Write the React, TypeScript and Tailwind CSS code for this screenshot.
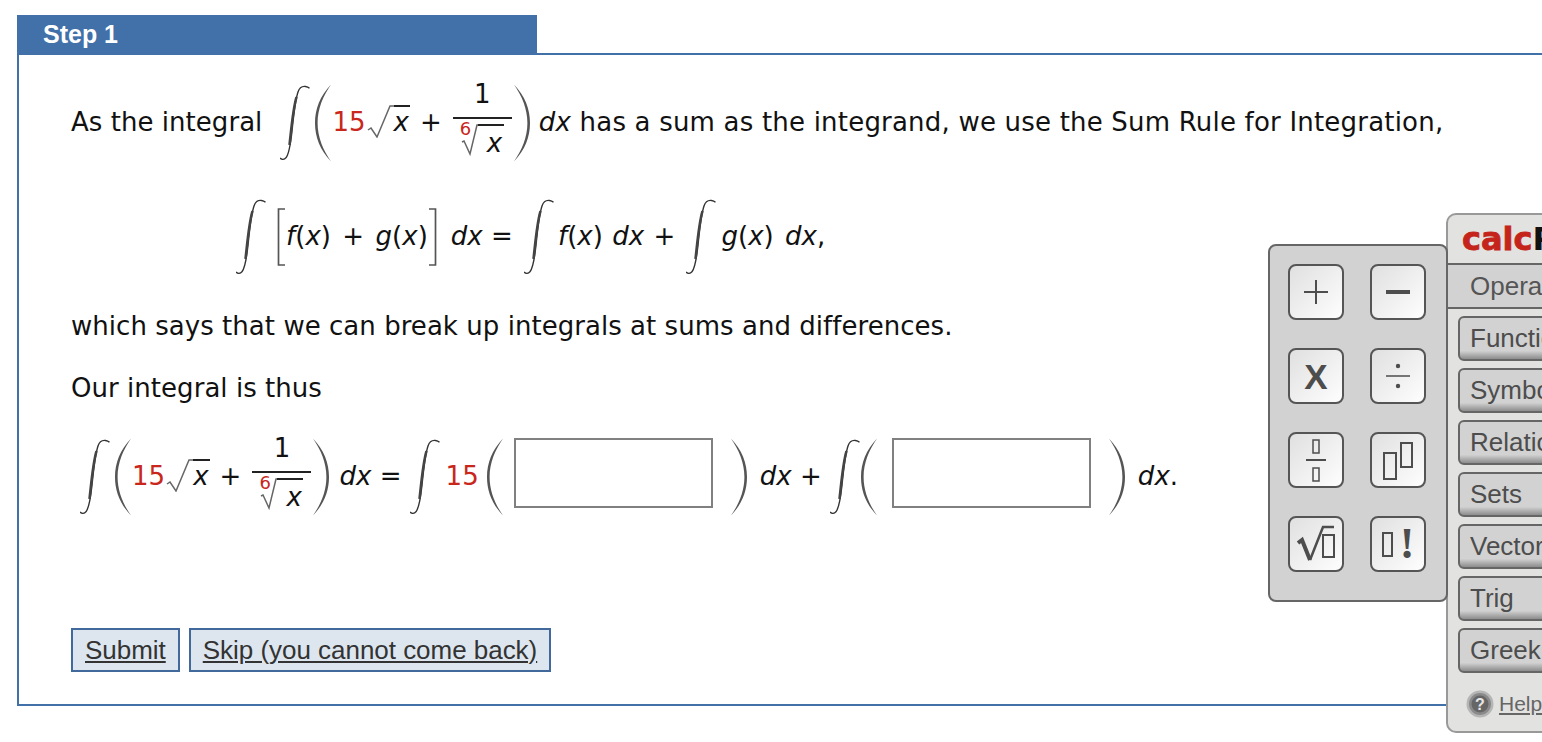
import type { ReactNode } from 'react'

const Integral = () => (
  <svg width="30" height="76" viewBox="0 0 30 76" fill="none" className="shrink-0">
    <path d="M0 73c1.500 2 4.500 1.700 6-.3C9 69 10.500 60 12 46c1.500-15 3-30 6-39C19.500 2.500 22 1 25.500 1.500c1.500.2 3 .9 4 1.800" stroke="#333" strokeWidth="1.400" />
    <path d="M9.500 60c1.500-12 3-34 7-48" stroke="#444" strokeWidth="2.600" />
  </svg>
)

const Paren = ({ right = false }: { right?: boolean }) => (
  <svg width="18" height="78" viewBox="0 0 18 78" className={right ? 'shrink-0 -scale-x-100' : 'shrink-0'}>
    <path d="M17 .5C6 12 1 25 1 39s5 27 16 38.500C9 66 3.600 53 3.600 39S9 12 17 .5z" fill="#555" />
  </svg>
)

const Bracket = ({ right = false }: { right?: boolean }) => (
  <svg width="9" height="58" viewBox="0 0 9 58" fill="none" className={right ? 'shrink-0 -scale-x-100' : 'shrink-0'}>
    <path d="M8 1H1.500v56H8" stroke="#555" strokeWidth="1.700" />
  </svg>
)

const Sqrt = () => (
  <span className="flex items-start self-start mt-[21px]">
    <svg width="27" height="33" viewBox="0 0 27 33" fill="none" className="shrink-0">
      <path d="M1 25l3-2 6 9L23 1h4" stroke="#666" strokeWidth="1.500" />
    </svg>
    <span className="border-t-2 border-[#222] leading-[31px] italic pr-[1px]">x</span>
  </span>
)

const Fraction = () => (
  <span className="flex flex-col items-center w-[59px] h-[78px] shrink-0">
    <span className="h-[33px] leading-[21px]">1</span>
    <span className="w-full h-[2px] bg-[#222] shrink-0" />
    <span className="relative flex items-start">
      <span className="absolute -left-[1px] top-[1px] text-[18px] leading-[18px] text-[#c9261c]">6</span>
      <svg width="17" height="32" viewBox="0 0 17 32" fill="none" className="shrink-0 mt-[5px]">
        <path d="M1 18l2-1 6 13L16 1h1" stroke="#666" strokeWidth="1.500" />
      </svg>
      <span className="mt-[5px] w-[26px] border-t-2 border-[#222] leading-[34px] italic pl-[9px]">x</span>
    </span>
  </span>
)

const Integrand = () => (
  <span className="flex items-center ml-[4px]">
    <Paren />
    <span className="text-[#c9261c] mr-[1px] mb-[2px]">15</span>
    <Sqrt />
    <span className="ml-[10px] mr-[11px] mb-[2px]">+</span>
    <Fraction />
    <span className="ml-[1px]"><Paren right /></span>
  </span>
)

const AnswerBox = ({ label }: { label: string }) => (
  <input aria-label={label} className="self-start w-[199px] h-[70px] border-2 border-[#808080] bg-white shrink-0" />
)

const Tile = ({ children }: { children: ReactNode }) => (
  <div className="w-[56px] h-[56px] rounded-[8px] border-2 border-[#555] bg-gradient-to-br from-[#e0e0e0] to-[#fefefe] flex items-center justify-center text-[#4d4d4d]">
    {children}
  </div>
)

const Glyph = ({ children }: { children: ReactNode }) => (
  <svg width="52" height="52" viewBox="0 0 52 52" fill="none" stroke="#4d4d4d" strokeWidth="2">
    {children}
  </svg>
)

const menu = ['Functions', 'Symbols', 'Relations', 'Sets', 'Vectors', 'Trig', 'Greek']

function CalcPad() {
  return (
    <div className="absolute left-[1268px] top-[213px] flex items-start font-['Liberation_Sans',sans-serif]">
      <div className="relative z-10 mt-[31px] w-[180px] h-[358px] bg-[#d2d2d2] border-2 border-[#666] rounded-[8px] grid grid-cols-[56px_56px] gap-x-[26px] gap-y-[28px] content-start pl-[18px] pt-[18px]">
        <Tile>
          <Glyph><path d="M26 14v24M14 26h24" /></Glyph>
        </Tile>
        <Tile>
          <Glyph><path d="M14 26h24" strokeWidth="4" /></Glyph>
        </Tile>
        <Tile>
          <span className="font-bold text-[35px] leading-none">X</span>
        </Tile>
        <Tile>
          <Glyph>
            <path d="M14 26h24" strokeWidth="1.500" />
            <circle cx="26" cy="16" r="2.200" fill="#4d4d4d" stroke="none" />
            <circle cx="26" cy="36" r="2.200" fill="#4d4d4d" stroke="none" />
          </Glyph>
        </Tile>
        <Tile>
          <Glyph>
            <rect x="23" y="6" width="6" height="13" strokeWidth="1.500" />
            <path d="M16 26h20" />
            <rect x="23" y="34" width="6" height="13" strokeWidth="1.500" />
          </Glyph>
        </Tile>
        <Tile>
          <Glyph>
            <rect x="12" y="19" width="12" height="26" />
            <rect x="29" y="9" width="11" height="24" />
          </Glyph>
        </Tile>
        <Tile>
          <Glyph>
            <path d="M8 25l4-3 8 20" strokeWidth="4" />
            <path d="M20 42L33 9h11" strokeWidth="2.500" />
            <rect x="33" y="17" width="11" height="22" />
          </Glyph>
        </Tile>
        <Tile>
          <span className="flex items-center gap-[7px]">
            <span className="w-[11px] h-[25px] border-2 border-[#4d4d4d]" />
            <span className="font-['Liberation_Serif',serif] font-bold text-[44px] leading-none">!</span>
          </span>
        </Tile>
      </div>
      <div className="-ml-[2px] w-[150px] h-[520px] flex flex-col">
        <div className="h-[50px] shrink-0 bg-[#e2e2e0] border-2 border-b-0 border-r-0 border-[#999] rounded-tl-[10px] pl-[14px] flex items-center font-['DejaVu_Sans',sans-serif] font-bold text-[32px] leading-none [-webkit-text-stroke:0.8px_#c4241a] whitespace-nowrap">
          <span className="text-[#c4241a]">calc</span>
          <span className="text-[#111] [-webkit-text-stroke:0px]">Pad</span>
        </div>
        <div className="h-[44px] shrink-0 border-t-2 border-[#666] bg-[#d2d2d2] pl-[24px] flex items-center text-[26px] text-[#555]">
          Operations
        </div>
        <div className="flex-1 bg-[#e2e2e0] border-t-2 border-l-2 border-b-2 border-t-[#666] border-l-[#999] border-b-[#999] rounded-bl-[10px] pl-[10px] pt-[7px] flex flex-col gap-[7px]">
          {menu.map((item) => (
            <div
              key={item}
              className="h-[45px] shrink-0 border-2 border-[#666] rounded-[6px] bg-gradient-to-b from-[#d2d2d2] from-80% to-[#8d8d8d] pl-[10px] flex items-center text-[26px] text-[#4d4d4d] whitespace-nowrap"
            >
              {item}
            </div>
          ))}
          <div className="flex items-center gap-[5px] pl-[8px] mt-[8px] text-[21px] text-[#666]">
            <svg width="28" height="28" viewBox="0 0 28 28">
              <circle cx="14" cy="14" r="13.500" fill="#b5b5b5" />
              <circle cx="14" cy="14" r="11" fill="#8a8a8a" />
              <circle cx="14" cy="14" r="8.500" fill="#666" />
              <text x="14" y="20" textAnchor="middle" fontSize="16" fontWeight="bold" fill="#e8e8e8" fontFamily="Liberation Sans">?</text>
            </svg>
            <span className="underline">Help</span>
          </div>
        </div>
      </div>
    </div>
  )
}

export default function App() {
  return (
    <div className="relative w-screen h-[742px] overflow-hidden bg-white pl-[17px] pt-[15px]">
      <div className="w-[520px] h-[40px] bg-[#4270a8] text-white font-['Liberation_Sans',sans-serif] font-bold text-[25px] leading-[38px] pl-[26px]">
        Step 1
      </div>
      <div className="w-[1600px] h-[653px] -mt-[2px] border-2 border-[#4270a8] pl-[52px] font-['DejaVu_Sans',sans-serif] text-[26px] tracking-[0.04px] text-[#111]">
        {/* first sentence */}
        <div className="flex items-center h-[78px] mt-[29px] whitespace-nowrap">
          <span className="mr-[18px] mb-[2px]">As the integral</span>
          <Integral />
          <Integrand />
          <span className="ml-[8px] mb-[2px] tracking-[0.2px]"><i>dx</i> has a sum as the integrand, we use the Sum Rule for Integration,</span>
        </div>
        {/* sum rule */}
        <div className="flex items-center h-[76px] mt-[37px] pl-[165px] whitespace-nowrap">
          <Integral />
          <span className="ml-[11px]"><Bracket /></span>
          <span className="mb-[2px] [word-spacing:3px]"><i>f</i>(<i>x</i>) + <i>g</i>(<i>x</i>)</span>
          <Bracket right />
          <span className="ml-[14px] mb-[2px]"><i>dx</i> =</span>
          <span className="ml-[11px]"><Integral /></span>
          <span className="ml-[4px] mb-[2px] [word-spacing:1px]"><i>f</i>(<i>x</i>) <i>dx</i> +</span>
          <span className="ml-[11px]"><Integral /></span>
          <span className="ml-[5px] mb-[2px] [word-spacing:3px]"><i>g</i>(<i>x</i>) <i>dx</i>,</span>
        </div>
        <p className="mt-[33px] leading-[36px]">which says that we can break up integrals at sums and differences.</p>
        <p className="mt-[26px] leading-[36px]">Our integral is thus</p>
        {/* answer line */}
        <div className="flex items-center h-[78px] mt-[32px] pl-[9px] whitespace-nowrap">
          <Integral />
          <Integrand />
          <span className="ml-[9px] mb-[2px]"><i>dx</i> =</span>
          <span className="ml-[8px]"><Integral /></span>
          <span className="ml-[6px] mb-[2px] text-[#c9261c]">15</span>
          <span className="ml-[7px] mr-[10px]"><Paren /></span>
          <AnswerBox label="first integrand" />
          <span className="ml-[17px]"><Paren right /></span>
          <span className="ml-[12px] mb-[2px]"><i>dx</i> +</span>
          <span className="ml-[8px]"><Integral /></span>
          <Paren />
          <span className="ml-[14px] self-start"><AnswerBox label="second integrand" /></span>
          <span className="ml-[17px]"><Paren right /></span>
          <span className="ml-[12px] mb-[2px]"><i>dx</i>.</span>
        </div>
        {/* actions */}
        <div className="flex gap-[9px] mt-[112px] font-['Liberation_Sans',sans-serif] tracking-[-0.03px] text-[#333]">
          <button className="h-[44px] px-[12px] border-2 border-[#41699c] bg-[#dde6ef] underline">Submit</button>
          <button className="h-[44px] px-[12px] border-2 border-[#41699c] bg-[#dde6ef] underline">Skip (you cannot come back)</button>
        </div>
      </div>
      <CalcPad />
    </div>
  )
}
